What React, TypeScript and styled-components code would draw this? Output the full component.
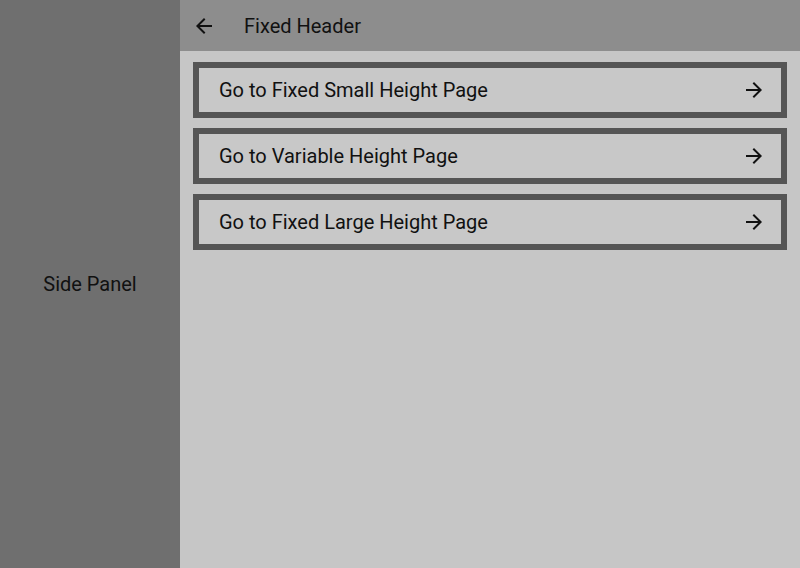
import React from 'react';
import styled, { createGlobalStyle } from 'styled-components';

const GlobalStyle = createGlobalStyle`
  html, body {
    margin: 0;
    padding: 0;
  }
  body {
    font-family: Roboto, 'Noto Sans', sans-serif;
    color: #111;
  }
`;

const pages = [
  'Go to Fixed Small Height Page',
  'Go to Variable Height Page',
  'Go to Fixed Large Height Page',
];

const ArrowBack: React.FC = () => (
  <svg width="24" height="24" viewBox="0 0 24 24" fill="#111">
    <path d="M20 11H7.83l5.59-5.59L12 4l-8 8 8 8 1.41-1.41L7.83 13H20v-2z" />
  </svg>
);

const ArrowForward: React.FC = () => (
  <svg width="24" height="24" viewBox="0 0 24 24" fill="#111">
    <path d="M12 4l-1.41 1.41L16.17 11H4v2h12.17l-5.58 5.59L12 20l8-8z" />
  </svg>
);

const App: React.FC = () => {
  return (
    <StyledLayout>
      <GlobalStyle />
      <StyledSidePanel>Side Panel</StyledSidePanel>
      <StyledMain>
        <StyledHeader>
          <StyledIconButton>
            <ArrowBack />
          </StyledIconButton>
          <StyledTitle>Fixed Header</StyledTitle>
        </StyledHeader>
        <StyledList>
          {pages.map((page) => (
            <StyledCard key={page}>
              <StyledCardLabel>{page}</StyledCardLabel>
              <ArrowForward />
            </StyledCard>
          ))}
        </StyledList>
      </StyledMain>
    </StyledLayout>
  );
};

const StyledLayout = styled.div`
  display: flex;
  width: 100vw;
  height: 100vh;
  overflow: hidden;
`;

const StyledSidePanel = styled.aside`
  display: flex;
  align-items: center;
  justify-content: center;
  width: 180px;
  flex-shrink: 0;
  background: #6f6f6f;
  font-size: 20px;
`;

const StyledMain = styled.main`
  display: flex;
  flex: 1;
  flex-direction: column;
  background: #c6c6c6;
`;

const StyledHeader = styled.header`
  display: flex;
  align-items: center;
  height: 51px;
  padding-left: 12px;
  gap: 28px;
  background: #8d8d8d;
`;

const StyledIconButton = styled.div`
  display: flex;
  width: 24px;
  height: 24px;
`;

const StyledTitle = styled.h1`
  margin: 0;
  font-size: 20px;
  font-weight: 400;
`;

const StyledList = styled.div`
  display: flex;
  flex-direction: column;
  gap: 10px;
  padding: 11px 13px;
`;

const StyledCard = styled.div`
  display: flex;
  align-items: center;
  justify-content: space-between;
  box-sizing: border-box;
  height: 56px;
  padding: 0 15px 0 20px;
  border: 6px solid #555;
  background: #c8c8c8;
`;

const StyledCardLabel = styled.span`
  font-size: 20px;
`;

export default App;
